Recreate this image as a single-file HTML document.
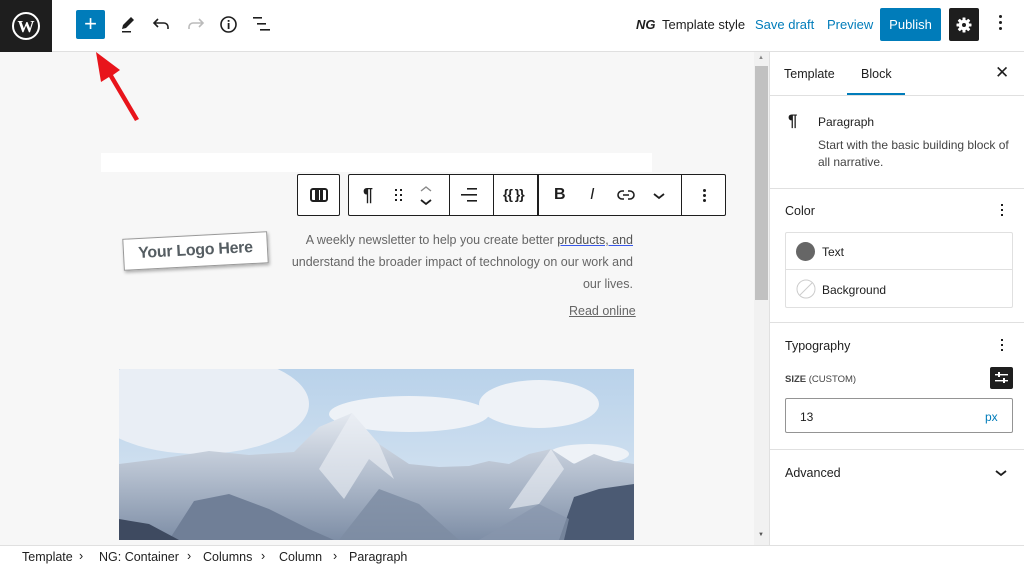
<!DOCTYPE html>
<html><head><meta charset="utf-8"><style>
*{box-sizing:border-box;margin:0;padding:0}
body{width:1024px;height:565px;overflow:hidden;background:#fff;font-family:"Liberation Sans",sans-serif;color:#1e1e1e;position:relative;font-size:13px}
.abs{position:absolute}
.top{left:0;top:0;width:1024px;height:52px;border-bottom:1px solid #e0e0e0;background:#fff}
.ic{position:absolute}
.canvas{left:0;top:52px;width:754px;height:493px;background:#f7f7f7}
.sb{left:754px;top:52px;width:15px;height:493px;background:#f1f1f1}
.side{left:769px;top:52px;width:255px;height:493px;background:#fff;border-left:1px solid #e0e0e0}
.foot{left:0;top:545px;width:1024px;height:20px;background:#fff;border-top:1px solid #e0e0e0;font-size:12.5px;color:#1e1e1e}
.tb{position:absolute;top:174px;height:42px;border:1px solid #1e1e1e;background:#fff;border-radius:2px}
.sep{position:absolute;top:0;width:1px;height:40px;background:#1e1e1e}
.hr{position:absolute;left:0;width:255px;height:1px;background:#e0e0e0}
</style></head><body>
<div class="abs top">
  <div class="abs" style="left:0;top:0;width:52px;height:52px;background:#1e1e1e"></div>
  <svg class="ic" style="left:11px;top:11px" width="30" height="30" viewBox="0 0 30 30"><circle cx="15" cy="15" r="13" fill="none" stroke="#fff" stroke-width="2"/><text x="15" y="21" font-family="Liberation Serif" font-weight="bold" font-size="17" fill="#fff" text-anchor="middle">W</text></svg>
  <div class="abs" style="left:76px;top:10px;width:29px;height:29px;background:#007cba;border-radius:2px;color:#fff;font-size:22px;line-height:28px;text-align:center">+</div>
  <svg class="ic" style="left:119px;top:14px" width="20" height="20" viewBox="0 0 20 20"><path d="M12 3l3 3-8 8-4 1 1-4z" fill="#1e1e1e"/><rect x="3" y="17" width="9" height="1.5" fill="#1e1e1e"/></svg>
  <svg class="ic" style="left:152px;top:15px" width="20" height="18" viewBox="0 0 20 18"><path d="M6 4L2 8l4 4M2 8h10a4 4 0 014 4v2" fill="none" stroke="#1e1e1e" stroke-width="1.6"/></svg>
  <svg class="ic" style="left:185px;top:15px" width="20" height="18" viewBox="0 0 20 18"><path d="M14 4l4 4-4 4M18 8H8a4 4 0 00-4 4v2" fill="none" stroke="#bbb" stroke-width="1.6"/></svg>
  <svg class="ic" style="left:219px;top:15px" width="20" height="20" viewBox="0 0 20 20"><circle cx="9.5" cy="9.5" r="7.5" fill="none" stroke="#1e1e1e" stroke-width="1.6"/><rect x="8.7" y="8" width="1.8" height="6" fill="#1e1e1e"/><rect x="8.7" y="5" width="1.8" height="1.8" fill="#1e1e1e"/></svg>
  <svg class="ic" style="left:251px;top:16px" width="20" height="16" viewBox="0 0 20 16"><rect x="2" y="1" width="9" height="1.6" fill="#1e1e1e"/><rect x="6" y="7" width="9" height="1.6" fill="#1e1e1e"/><rect x="9" y="13" width="10" height="1.6" fill="#1e1e1e"/></svg>
  <div class="abs" style="left:636px;top:17px;font-weight:bold;font-style:italic;font-size:13px">NG</div>
  <div class="abs" style="left:662px;top:17px;font-size:13px;color:#1e1e1e">Template style</div>
  <div class="abs" style="left:755px;top:17px;color:#007cba">Save draft</div>
  <div class="abs" style="left:827px;top:17px;color:#007cba">Preview</div>
  <div class="abs" style="left:880px;top:8px;width:61px;height:33px;background:#007cba;border-radius:2px;color:#fff;text-align:center;line-height:33px">Publish</div>
  <div class="abs" style="left:949px;top:8px;width:30px;height:33px;background:#1e1e1e;border-radius:2px"></div>
  <svg class="ic" style="left:955px;top:16px" width="18" height="18" viewBox="0 0 18 18"><g fill="#fff"><rect x="7.5" y="1.5" width="3" height="15" rx=".5"/><rect x="7.5" y="1.5" width="3" height="15" rx=".5" transform="rotate(45 9 9)"/><rect x="7.5" y="1.5" width="3" height="15" rx=".5" transform="rotate(90 9 9)"/><rect x="7.5" y="1.5" width="3" height="15" rx=".5" transform="rotate(135 9 9)"/><circle cx="9" cy="9" r="5.3"/></g><circle cx="9" cy="9" r="2" fill="#1e1e1e"/></svg>
  <div class="abs" style="left:999px;top:15px;width:3px;height:3px;background:#1e1e1e;border-radius:50%;box-shadow:0 6px 0 #1e1e1e,0 12px 0 #1e1e1e"></div>
</div>

<div class="abs canvas">
  <div class="abs" style="left:101px;top:101px;width:551px;height:19px;background:#fff"></div>
  <div class="abs" style="left:123px;top:183px;width:145px;height:32px;background:#fff;border:1px solid #999;box-shadow:1px 2px 3px rgba(0,0,0,.3);transform:rotate(-3deg);font-weight:bold;font-size:16px;color:#555d62;text-align:center;line-height:30px;letter-spacing:-.3px">Your Logo Here</div>
  <div class="abs" style="left:290px;top:177px;width:343px;font-size:12.5px;line-height:22px;color:#666;text-align:right">A weekly newsletter to help you create better <span style="color:#555;text-decoration:underline;text-decoration-color:#3858e9">products, and</span> understand the broader impact of technology on our work and our lives.</div>
  <div class="abs" style="left:569px;top:252px;font-size:12.5px;color:#666;text-decoration:underline">Read online</div>
  <svg class="abs" style="left:119px;top:317px" width="515" height="171" viewBox="0 0 515 171">
    <defs><linearGradient id="sky" x1="0" y1="0" x2="0" y2="1"><stop offset="0" stop-color="#b9d2ea"/><stop offset="1" stop-color="#dde8f3"/></linearGradient>
    <linearGradient id="m" x1="0" y1="0" x2="0" y2="1"><stop offset="0" stop-color="#e4e9f0"/><stop offset=".5" stop-color="#b2bdcd"/><stop offset="1" stop-color="#7e8ea6"/></linearGradient></defs>
    <rect width="515" height="171" fill="url(#sky)"/>
    <ellipse cx="80" cy="35" rx="110" ry="50" fill="#e9eef5"/>
    <ellipse cx="290" cy="45" rx="80" ry="18" fill="#eef2f7"/>
    <ellipse cx="420" cy="35" rx="60" ry="24" fill="#eef2f7"/>
    <ellipse cx="470" cy="85" rx="40" ry="10" fill="#eef2f7"/>
    <path d="M0 95L40 90 90 82 130 86 175 83 200 58 233 44 260 75 290 95 320 98 350 97 370 92 390 95 410 85 432 80 455 95 475 85 495 92 515 95V171H0z" fill="url(#m)"/>
    <path d="M233 44L200 100 225 130 250 90 275 110 260 75z" fill="#eef2f7" opacity=".6"/>
    <path d="M390 140L432 80 445 100 420 135z" fill="#eef2f7" opacity=".6"/>
    <path d="M50 171L75 132 110 125 150 140 190 160 215 171z" fill="#707f97"/>
    <path d="M220 171L260 120 300 135 340 171z" fill="#7d8ca3" opacity=".8"/>
    <path d="M0 150L30 155 60 171H0z" fill="#3e4a60"/>
    <path d="M440 171L455 128 480 120 515 115V171z" fill="#4b5a73"/>
    <path d="M360 171L420 135 450 150 445 171z" fill="#8796ad" opacity=".7"/>
  </svg>
</div>

<div class="tb" style="left:297px;width:43px"><svg class="ic" style="left:12px;top:13px" width="18" height="14" viewBox="0 0 18 14"><rect x="1" y="1" width="16" height="12" rx="2" fill="none" stroke="#1e1e1e" stroke-width="2"/><rect x="5" y="1" width="4" height="12" fill="#1e1e1e"/><rect x="10" y="1" width="3" height="12" fill="#1e1e1e"/></svg></div>
<div class="tb" style="left:348px;width:378px">
  <div class="abs" style="left:14px;top:10px;font-size:18px;font-weight:bold">¶</div>
  <div class="abs" style="left:46px;top:14px;width:2px;height:2px;background:#1e1e1e;box-shadow:5px 0 #1e1e1e,0 5px #1e1e1e,5px 5px #1e1e1e,0 10px #1e1e1e,5px 10px #1e1e1e"></div>
  <svg class="ic" style="left:70px;top:9px" width="14" height="24" viewBox="0 0 14 24"><path d="M2 7l5-4 5 4" fill="none" stroke="#888" stroke-width="1.4"/><path d="M2 16l5 4 5-4" fill="none" stroke="#1e1e1e" stroke-width="1.8"/></svg>
  <div class="sep" style="left:100px"></div>
  <svg class="ic" style="left:111px;top:12px" width="20" height="16" viewBox="0 0 20 16"><rect x="7" y="1" width="10" height="1.6" fill="#1e1e1e"/><rect x="1" y="7" width="16" height="1.6" fill="#1e1e1e"/><rect x="7" y="13" width="10" height="1.6" fill="#1e1e1e"/></svg>
  <div class="sep" style="left:144px"></div>
  <div class="abs" style="left:154px;top:11px;font-size:14px;font-weight:bold;letter-spacing:-1px">{{ }}</div>
  <div class="sep" style="left:188px;width:1.5px"></div>
  <div class="abs" style="left:205px;top:11px;font-size:16px;font-weight:bold">B</div>
  <div class="abs" style="left:241px;top:11px;font-size:16px;font-style:italic">I</div>
  <svg class="ic" style="left:267px;top:13px" width="20" height="14" viewBox="0 0 20 14"><path d="M8 3H6a4 4 0 000 8h2M12 3h2a4 4 0 010 8h-2M7 7h6" fill="none" stroke="#1e1e1e" stroke-width="1.6"/></svg>
  <svg class="ic" style="left:303px;top:16px" width="14" height="10" viewBox="0 0 14 10"><path d="M2 3l5 4 5-4" fill="none" stroke="#1e1e1e" stroke-width="1.8"/></svg>
  <div class="sep" style="left:332px"></div>
  <div class="abs" style="left:354px;top:14px;width:3px;height:3px;background:#1e1e1e;border-radius:50%;box-shadow:0 5px 0 #1e1e1e,0 10px 0 #1e1e1e"></div>
</div>

<svg class="abs" style="left:0;top:0" width="160" height="130" viewBox="0 0 160 130"><polygon points="96,52 120,70 113,75 139,119 135,121 109,77 101,82" fill="#e8141b"/></svg>

<div class="abs sb"><div class="abs" style="left:1px;top:14px;width:13px;height:234px;background:#c1c1c1"></div>
<div class="abs" style="left:4px;top:3px;font-size:6px;color:#888">▲</div><div class="abs" style="left:4px;top:480px;font-size:6px;color:#555">▼</div></div>

<div class="abs side">
  <div class="abs" style="left:14px;top:15px;font-size:12.5px">Template</div>
  <div class="abs" style="left:91px;top:15px;font-size:12.5px">Block</div>
  <div class="abs" style="left:77px;top:41px;width:58px;height:3px;background:#007cba"></div>
  <div class="abs" style="left:225px;top:11px;font-size:17px">✕</div>
  <div class="hr" style="top:43px"></div>
  <div class="abs" style="left:18px;top:59px;font-size:17px;font-weight:bold">¶</div>
  <div class="abs" style="left:48px;top:63px;font-size:12px;font-weight:500">Paragraph</div>
  <div class="abs" style="left:48px;top:85px;width:200px;font-size:12px;line-height:17px;color:#444">Start with the basic building block of all narrative.</div>
  <div class="hr" style="top:136px"></div>
  <div class="abs" style="left:15px;top:152px;font-size:12.5px">Color</div>
  <div class="abs" style="left:231px;top:152px;width:2px;height:2px;background:#1e1e1e;box-shadow:0 5px #1e1e1e,0 10px #1e1e1e"></div>
  <div class="abs" style="left:15px;top:180px;width:228px;height:76px;border:1px solid #e0e0e0;border-radius:2px"></div>
  <div class="abs" style="left:15px;top:217px;width:228px;height:1px;background:#e0e0e0"></div>
  <div class="abs" style="left:26px;top:190px;width:19px;height:19px;border-radius:50%;background:#666"></div>
  <div class="abs" style="left:52px;top:193px;font-size:12px">Text</div>
  <svg class="abs" style="left:26px;top:227px" width="20" height="20" viewBox="0 0 20 20"><circle cx="10" cy="10" r="9" fill="none" stroke="#ccc"/><path d="M4 16L16 4" stroke="#ccc"/></svg>
  <div class="abs" style="left:52px;top:231px;font-size:12px">Background</div>
  <div class="hr" style="top:270px"></div>
  <div class="abs" style="left:15px;top:287px;font-size:12.5px">Typography</div>
  <div class="abs" style="left:231px;top:287px;width:2px;height:2px;background:#1e1e1e;box-shadow:0 5px #1e1e1e,0 10px #1e1e1e"></div>
  <div class="abs" style="left:15px;top:322px;font-size:9.5px;color:#444"><b>SIZE</b> (CUSTOM)</div>
  <div class="abs" style="left:220px;top:315px;width:23px;height:22px;background:#1e1e1e;border-radius:2px"></div>
  <svg class="abs" style="left:223px;top:318px" width="17" height="16" viewBox="0 0 17 16"><rect x="2" y="4" width="13" height="1.4" fill="#fff"/><rect x="2" y="10" width="13" height="1.4" fill="#fff"/><rect x="5" y="2" width="2" height="5" fill="#fff"/><rect x="10" y="8" width="2" height="5" fill="#fff"/></svg>
  <div class="abs" style="left:15px;top:346px;width:228px;height:35px;border:1px solid #949494;border-radius:2px"></div>
  <div class="abs" style="left:30px;top:358px;font-size:12px">13</div>
  <div class="abs" style="left:215px;top:358px;font-size:12px;color:#007cba">px</div>
  <div class="hr" style="top:397px"></div>
  <div class="abs" style="left:15px;top:414px;font-size:12.5px">Advanced</div>
  <svg class="abs" style="left:224px;top:416px" width="14" height="10" viewBox="0 0 14 10"><path d="M2 3l5 4 5-4" fill="none" stroke="#1e1e1e" stroke-width="1.8"/></svg>
</div>

<div class="abs foot">
  <div class="abs" style="left:22px;top:4px">Template</div>
  <div class="abs" style="left:79px;top:3px">›</div>
  <div class="abs" style="left:99px;top:4px">NG: Container</div>
  <div class="abs" style="left:187px;top:3px">›</div>
  <div class="abs" style="left:203px;top:4px">Columns</div>
  <div class="abs" style="left:261px;top:3px">›</div>
  <div class="abs" style="left:279px;top:4px">Column</div>
  <div class="abs" style="left:333px;top:3px">›</div>
  <div class="abs" style="left:349px;top:4px">Paragraph</div>
</div>
</body></html>
